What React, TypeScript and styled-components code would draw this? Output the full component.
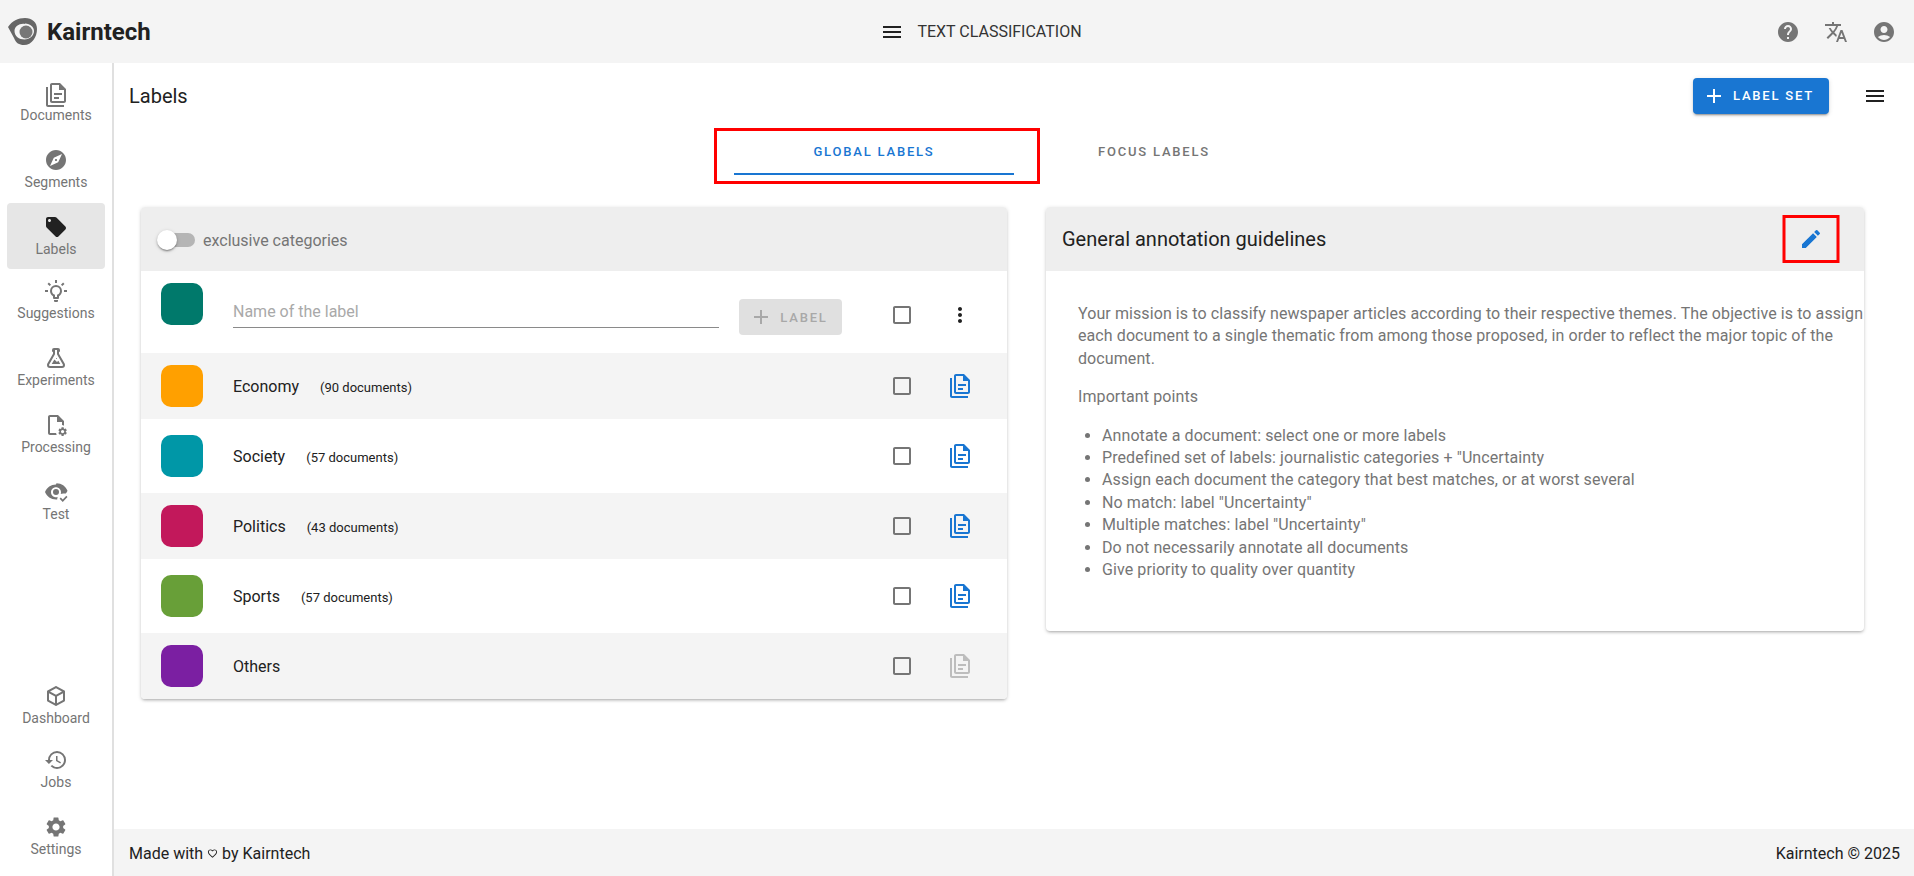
import React from "react";
import styled, { createGlobalStyle } from "styled-components";
import {
  MdAccountCircle,
  MdAdd,
  MdCheckBoxOutlineBlank,
  MdEdit,
  MdExplore,
  MdFavoriteBorder,
  MdHelp,
  MdHistory,
  MdLocalOffer,
  MdMenu,
  MdMoreVert,
  MdSettings,
  MdTranslate,
} from "react-icons/md";

const GlobalStyle = createGlobalStyle`
  html, body {
    margin: 0;
    height: 100%;
  }
  body {
    font-family: Roboto, "Liberation Sans", sans-serif;
    color: #212121;
    background: #fff;
    overflow: hidden;
  }
  * {
    box-sizing: border-box;
  }
`;

const Page = styled.div`
  height: 100vh;
  display: flex;
  flex-direction: column;
`;

const TopBar = styled.header`
  height: 63px;
  flex: none;
  display: grid;
  grid-template-columns: 1fr auto 1fr;
  align-items: center;
  background: #f4f4f4;
  padding: 0 18px 0 8px;
`;

const Brand = styled.div`
  display: flex;
  align-items: center;
  gap: 9px;
  font-size: 24px;
  font-weight: 700;
  color: #212121;
`;

const AppTitle = styled.div`
  display: flex;
  align-items: center;
  gap: 13px;
  font-size: 16px;
  color: #333;
  padding-left: 58px;

  svg {
    font-size: 24px;
    color: #212121;
  }
`;

const TopActions = styled.div`
  display: flex;
  justify-content: flex-end;
  align-items: center;
  gap: 24px;
  color: #757575;

  svg {
    font-size: 24px;
    display: block;
  }
`;

const Body = styled.div`
  flex: 1;
  min-height: 0;
  display: flex;
`;

const Sidebar = styled.nav`
  width: 114px;
  flex: none;
  display: flex;
  flex-direction: column;
  justify-content: space-between;
  border-right: 2px solid #e0e0e0;
  padding: 6px 7px 7px;
`;

const NavGroup = styled.div`
  display: flex;
  flex-direction: column;
  gap: 1px;
`;

const NavItem = styled.a<{ $active?: boolean; $tight?: boolean; $low?: boolean }>`
  height: 66px;
  display: flex;
  flex-direction: column;
  align-items: center;
  padding-top: 12px;
  margin-top: ${(p) => (p.$tight ? "-3px" : "0")};
  border-radius: 4px;
  background: ${(p) => (p.$active ? "#e6e6e6" : "transparent")};
  color: #757575;
  font-size: 14px;
  line-height: 16px;

  svg {
    width: 24px;
    height: 24px;
    display: block;
    margin-top: ${(p) => (p.$low ? "2px" : "0")};
    margin-bottom: ${(p) => (p.$low ? "0" : "2px")};
    color: ${(p) => (p.$active ? "#212121" : "#757575")};
  }
`;

const Main = styled.main`
  flex: 1;
  min-width: 0;
  display: flex;
  flex-direction: column;
`;

const Content = styled.div`
  flex: 1;
  min-height: 0;
  padding: 0 50px 0 27px;
`;

const TitleRow = styled.div`
  height: 65px;
  margin: 0 -23px 0 -12px;
  display: flex;
  align-items: center;
  justify-content: space-between;
`;

const PageTitle = styled.h1`
  margin: 0;
  font-size: 20px;
  font-weight: 400;
  color: #212121;
`;

const TitleActions = styled.div`
  display: flex;
  align-items: center;
  gap: 34px;

  > svg {
    font-size: 24px;
    color: #212121;
  }
`;

const PrimaryButton = styled.button`
  height: 36px;
  width: 136px;
  border: 0;
  border-radius: 4px;
  padding: 0 6px 0 0;
  display: flex;
  align-items: center;
  justify-content: center;
  gap: 7px;
  background: #1976d2;
  color: #fff;
  font: 500 13px Roboto, sans-serif;
  letter-spacing: 1.8px;
  box-shadow: 0 3px 1px -2px rgba(0, 0, 0, 0.2), 0 2px 2px rgba(0, 0, 0, 0.14),
    0 1px 5px rgba(0, 0, 0, 0.12);

  svg {
    font-size: 24px;
  }
`;

const TabBar = styled.div`
  display: flex;
  justify-content: center;
  padding-left: 23px;
`;

const Tab = styled.div<{ $active?: boolean }>`
  position: relative;
  width: 280px;
  height: 47px;
  display: flex;
  align-items: flex-start;
  justify-content: center;
  padding-top: 16px;
  font-size: 13px;
  font-weight: 500;
  line-height: 16px;
  letter-spacing: 1.8px;
  color: ${(p) => (p.$active ? "#1976d2" : "#757575")};
  border-bottom: 2px solid ${(p) => (p.$active ? "#1976d2" : "transparent")};
`;

const Callout = styled.span<{ $kind: "tab" | "icon" }>`
  position: absolute;
  border: 3px solid #f00;
  ${(p) =>
    p.$kind === "tab"
      ? "top: 0; left: -20px; width: 326px; height: 56px;"
      : "top: 50%; left: 50%; width: 57px; height: 48px; transform: translate(-50%, -50%);"}
`;

const Cards = styled.div`
  margin-top: 32px;
  display: grid;
  grid-template-columns: 866px 818px;
  gap: 39px;
  align-items: start;
`;

const Card = styled.section`
  border-radius: 4px;
  overflow: hidden;
  background: #fff;
  box-shadow: 0 2px 3px -1px rgba(0, 0, 0, 0.25), 0 1px 4px rgba(0, 0, 0, 0.14);
`;

const CardHeader = styled.div`
  height: 64px;
  display: flex;
  align-items: center;
  background: #eeeeee;
`;

const SwitchWrap = styled.div`
  position: relative;
  width: 34px;
  height: 14px;
  margin: 2px 8px 0 20px;
  border-radius: 7px;
  background: #b5b5b5;
`;

const SwitchThumb = styled.span`
  position: absolute;
  left: -4px;
  top: -3px;
  width: 20px;
  height: 20px;
  border-radius: 50%;
  background: #fff;
  box-shadow: 0 2px 2px -1px rgba(0, 0, 0, 0.3), 0 1px 2px rgba(0, 0, 0, 0.18),
    0 1px 4px rgba(0, 0, 0, 0.14);
`;

const SwitchLabel = styled.span`
  margin-top: 2px;
  font-size: 16px;
  color: #757575;
`;

const LabelRow = styled.div<{ $shade?: boolean; $tall?: boolean; $form?: boolean }>`
  height: ${(p) => (p.$form ? "82px" : p.$tall ? "74px" : "66px")};
  display: flex;
  align-items: ${(p) => (p.$form ? "flex-start" : "center")};
  padding: ${(p) => (p.$form ? "12px" : "0")} 0 0 20px;
  background: ${(p) => (p.$shade ? "#f4f4f4" : "#fff")};
`;

const Swatch = styled.div<{ $color: string }>`
  width: 42px;
  height: 42px;
  flex: none;
  margin-right: 30px;
  border-radius: 10px;
  background: ${(p) => p.$color};
`;

const LabelName = styled.div`
  flex: 1;
  display: flex;
  align-items: baseline;
  gap: 21px;
  font-size: 16px;
  color: #212121;
`;

const DocCount = styled.span`
  font-size: 13px;
`;

const NameField = styled.div`
  width: 486px;
  height: 33px;
  margin-top: 12px;
  padding-top: 7px;
  border-bottom: 1px solid #8a8a8a;
  font-size: 16px;
  line-height: 20px;
  color: #a9a9a9;
`;

const AddButton = styled.button`
  width: 103px;
  height: 36px;
  margin: 16px 0 0 20px;
  border: 0;
  border-radius: 4px;
  padding: 0 4px 0 0;
  display: flex;
  align-items: center;
  justify-content: center;
  gap: 7px;
  background: #e0e0e0;
  color: #a8a8a8;
  font: 500 13px Roboto, sans-serif;
  letter-spacing: 1.8px;

  svg {
    font-size: 24px;
  }
`;

const RowActions = styled.div<{ $form?: boolean }>`
  width: 136px;
  margin-left: ${(p) => (p.$form ? "auto" : "0")};
  margin-top: ${(p) => (p.$form ? "20px" : "0")};
  flex: none;
  display: grid;
  grid-template-columns: 24px 24px;
  justify-content: end;
  column-gap: 34px;
  padding-right: 35px;
  align-items: center;
  color: #757575;

  svg {
    font-size: 24px;
    display: block;
  }
`;

const DocIcon = styled.svg<{ $off?: boolean }>`
  width: 24px;
  height: 24px;
  display: block;
  color: ${(p) => (p.$off ? "#bdbdbd" : "#1976d2")};
`;

const GuideTitle = styled.h2`
  flex: 1;
  margin: 0;
  padding-left: 16px;
  font-size: 20px;
  font-weight: 400;
  color: #212121;
`;

const EditSlot = styled.div`
  position: relative;
  width: 24px;
  height: 24px;
  margin-right: 41px;
  color: #1976d2;

  svg {
    font-size: 24px;
    display: block;
  }
`;

const GuideBody = styled.div`
  padding: 32px 0 50px 32px;
  font-size: 16px;
  line-height: 22.4px;
  letter-spacing: 0.09px;
  color: #757575;

  p {
    margin: 0 0 16px;
  }
`;

const GuideList = styled.ul`
  margin: 0;
  padding-left: 24px;
`;

const Footer = styled.footer`
  height: 47px;
  flex: none;
  display: flex;
  align-items: center;
  justify-content: space-between;
  padding: 2px 14px 0 15px;
  background: #f4f4f4;
  font-size: 16px;
  color: #212121;
`;

const Made = styled.span`
  display: inline-flex;
  align-items: center;
  gap: 4px;

  svg {
    font-size: 11px;
  }
`;

const Icon = ({ d }: { d: string }) => (
  <svg viewBox="0 0 24 24" fill="currentColor">
    <path d={d} />
  </svg>
);

const docsPath =
  "M16 0H8C6.9 0 6 .9 6 2V18C6 19.1 6.9 20 8 20H20C21.1 20 22 19.1 22 18V6L16 0M20 18H8V2H15V7H20V18M4 4V22H20V24H4C2.9 24 2 23.1 2 22V4H4M10 10V12H18V10H10M10 14V16H15V14H10Z";
const bulbPath =
  "M20,11H23V13H20V11M1,11H4V13H1V11M13,1V4H11V1H13M4.92,3.5L7.05,5.64L5.63,7.05L3.5,4.93L4.92,3.5M16.95,5.63L19.07,3.5L20.5,4.93L18.36,7.05L16.95,5.63M12,6A6,6 0 0,1 18,12C18,14.22 16.79,16.16 15,17.2V19A1,1 0 0,1 14,20H10A1,1 0 0,1 9,19V17.2C7.21,16.16 6,14.22 6,12A6,6 0 0,1 12,6M14,21V22A1,1 0 0,1 13,23H11A1,1 0 0,1 10,22V21H14M11,18H13V15.87C14.73,15.43 16,13.86 16,12A4,4 0 0,0 12,8A4,4 0 0,0 8,12C8,13.86 9.27,15.43 11,15.87V18Z";
const flaskPath =
  "M5,19A1,1 0 0,0 6,20H18A1,1 0 0,0 19,19C19,18.79 18.93,18.59 18.82,18.43L13,8.35V4H11V8.35L5.18,18.43C5.07,18.59 5,18.79 5,19M6,22A3,3 0 0,1 3,19C3,18.4 3.18,17.84 3.5,17.37L9,7.81V6A1,1 0 0,1 8,5V4A2,2 0 0,1 10,2H14A2,2 0 0,1 16,4V5A1,1 0 0,1 15,6V7.81L20.5,17.37C20.82,17.84 21,18.4 21,19A3,3 0 0,1 18,22H6M13,16L14.34,14.66L16.27,18H7.73L10.39,13.39L13,16M12.5,12A0.5,0.5 0 0,1 13,12.5A0.5,0.5 0 0,1 12.5,13A0.5,0.5 0 0,1 12,12.5A0.5,0.5 0 0,1 12.5,12Z";
const cubePath =
  "M21,16.5C21,16.88 20.79,17.21 20.47,17.38L12.57,21.82C12.41,21.94 12.21,22 12,22C11.79,22 11.59,21.94 11.43,21.82L3.53,17.38C3.21,17.21 3,16.88 3,16.5V7.5C3,7.12 3.21,6.79 3.53,6.62L11.43,2.18C11.59,2.06 11.79,2 12,2C12.21,2 12.41,2.06 12.57,2.18L20.47,6.62C20.79,6.79 21,7.12 21,7.5V16.5M12,4.15L6.04,7.5L12,10.85L17.96,7.5L12,4.15M5,15.91L11,19.29V12.58L5,9.21V15.91M19,15.91V9.21L13,12.58V19.29L19,15.91Z";

const FileCogIcon = () => (
  <svg viewBox="0 0 24 24" fill="currentColor">
    <path d="M6 2C4.9 2 4 2.9 4 4V20C4 21.1 4.9 22 6 22H12.7C12.4 21.4 12.2 20.7 12.1 20H6V4H13V9H18V12.1C18.7 12.2 19.4 12.4 20 12.7V8L14 2H6Z" />
    <path
      transform="translate(13.2 13.2) scale(0.45)"
      d="M19.14 12.94c.04-.3.06-.61.06-.94 0-.32-.02-.64-.07-.94l2.03-1.58c.18-.14.23-.41.12-.61l-1.92-3.32c-.12-.22-.37-.29-.59-.22l-2.39.96c-.5-.38-1.03-.7-1.62-.94l-.36-2.54c-.04-.24-.24-.41-.48-.41h-3.84c-.24 0-.43.17-.47.41l-.36 2.54c-.59.24-1.13.57-1.62.94l-2.39-.96c-.22-.08-.47 0-.59.22L2.74 8.87c-.12.21-.08.47.12.61l2.03 1.58c-.05.3-.09.63-.09.94s.02.64.07.94l-2.03 1.58c-.18.14-.23.41-.12.61l1.92 3.32c.12.22.37.29.59.22l2.39-.96c.5.38 1.03.7 1.62.94l.36 2.54c.05.24.24.41.48.41h3.84c.24 0 .44-.17.47-.41l.36-2.54c.59-.24 1.13-.56 1.62-.94l2.39.96c.22.08.47 0 .59-.22l1.92-3.32c.12-.22.07-.47-.12-.61l-2.01-1.58zM12 15.6c-1.98 0-3.6-1.62-3.6-3.6s1.62-3.6 3.6-3.6 3.6 1.62 3.6 3.6-1.62 3.6-3.6 3.6z"
    />
  </svg>
);

const EyeCheckIcon = () => (
  <svg viewBox="0 0 24 24" fill="currentColor">
    <path
      fillRule="evenodd"
      d="M12 4.5C7 4.5 2.7 7.6 1 12c1.7 4.4 6 7.5 11 7.5.4 0 .8 0 1.2-.1 0-.8.2-1.6.5-2.4-.5.1-1.1.2-1.7.2-2.8 0-5-2.2-5-5s2.2-5 5-5 5 2.2 5 5c0 .6-.1 1.2-.3 1.7.8-.3 1.7-.5 2.6-.5h2.5c.7-.8 1.3-1.7 1.7-2.7-1.7-4.4-6-7.5-11-7.5Z"
    />
    <circle cx="12" cy="12" r="3" />
    <path d="M23.5 17L18.75 22L15.6 18.8L16.8 17.6L18.75 19.5L22.3 15.8L23.5 17Z" />
  </svg>
);

const Logo = () => (
  <svg width="30" height="28" viewBox="0 0 30 28">
    <path
      fill="#666"
      fillRule="evenodd"
      d="M0 9C4 3 10 0 17 0c7 0 12 4 12 11 0 8-5 16-13 16-5 0-8-2-10-7L0 9Zm17-3C12 5 6.500 8 6.500 13c0 5 4.500 8.500 10 8.500 5 0 9.500-4 9.500-8.500 0-4-3.500-7-9-7.500Z"
    />
    <circle cx="18" cy="14" r="6.500" fill="#777" />
  </svg>
);

const DocsGlyph = ({ off }: { off?: boolean }) => (
  <DocIcon $off={off} viewBox="0 0 24 24" fill="currentColor">
    <path d={docsPath} />
  </DocIcon>
);

const labels = [
  { name: "Economy", count: "(90 documents)", color: "#ffa000", shade: true },
  { name: "Society", count: "(57 documents)", color: "#0097a7", tall: true },
  { name: "Politics", count: "(43 documents)", color: "#c2185b", shade: true },
  { name: "Sports", count: "(57 documents)", color: "#689f38", tall: true },
  { name: "Others", color: "#7b1fa2", shade: true, off: true },
];

const points = [
  "Annotate a document: select one or more labels",
  'Predefined set of labels: journalistic categories + "Uncertainty',
  "Assign each document the category that best matches, or at worst several",
  'No match: label "Uncertainty"',
  'Multiple matches: label "Uncertainty"',
  "Do not necessarily annotate all documents",
  "Give priority to quality over quantity",
];

export default function App() {
  return (
    <Page>
      <GlobalStyle />
      <TopBar>
        <Brand>
          <Logo />
          Kairntech
        </Brand>
        <AppTitle>
          <MdMenu />
          TEXT CLASSIFICATION
        </AppTitle>
        <TopActions>
          <MdHelp />
          <MdTranslate />
          <MdAccountCircle />
        </TopActions>
      </TopBar>
      <Body>
        <Sidebar>
          <NavGroup>
            <NavItem $low>
              <Icon d={docsPath} />
              Documents
            </NavItem>
            <NavItem>
              <MdExplore />
              Segments
            </NavItem>
            <NavItem $active>
              <MdLocalOffer />
              Labels
            </NavItem>
            <NavItem $tight>
              <Icon d={bulbPath} />
              Suggestions
            </NavItem>
            <NavItem>
              <Icon d={flaskPath} />
              Experiments
            </NavItem>
            <NavItem>
              <FileCogIcon />
              Processing
            </NavItem>
            <NavItem>
              <EyeCheckIcon />
              Test
            </NavItem>
          </NavGroup>
          <NavGroup>
            <NavItem>
              <Icon d={cubePath} />
              Dashboard
            </NavItem>
            <NavItem $tight>
              <MdHistory />
              Jobs
            </NavItem>
            <NavItem>
              <MdSettings />
              Settings
            </NavItem>
          </NavGroup>
        </Sidebar>
        <Main>
          <Content>
            <TitleRow>
              <PageTitle>Labels</PageTitle>
              <TitleActions>
                <PrimaryButton>
                  <MdAdd />
                  LABEL SET
                </PrimaryButton>
                <MdMenu />
              </TitleActions>
            </TitleRow>
            <TabBar>
              <Tab $active>
                GLOBAL LABELS
                <Callout $kind="tab" />
              </Tab>
              <Tab>FOCUS LABELS</Tab>
            </TabBar>
            <Cards>
              <Card>
                <CardHeader>
                  <SwitchWrap>
                    <SwitchThumb />
                  </SwitchWrap>
                  <SwitchLabel>exclusive categories</SwitchLabel>
                </CardHeader>
                <LabelRow $form>
                  <Swatch $color="#00796b" />
                  <NameField>Name of the label</NameField>
                  <AddButton>
                    <MdAdd />
                    LABEL
                  </AddButton>
                  <RowActions $form>
                    <MdCheckBoxOutlineBlank />
                    <MdMoreVert color="#212121" />
                  </RowActions>
                </LabelRow>
                {labels.map((l) => (
                  <LabelRow key={l.name} $shade={l.shade} $tall={l.tall}>
                    <Swatch $color={l.color} />
                    <LabelName>
                      {l.name}
                      {l.count && <DocCount>{l.count}</DocCount>}
                    </LabelName>
                    <RowActions>
                      <MdCheckBoxOutlineBlank />
                      <DocsGlyph off={l.off} />
                    </RowActions>
                  </LabelRow>
                ))}
              </Card>
              <Card>
                <CardHeader>
                  <GuideTitle>General annotation guidelines</GuideTitle>
                  <EditSlot>
                    <MdEdit />
                    <Callout $kind="icon" />
                  </EditSlot>
                </CardHeader>
                <GuideBody>
                  <p>
                    Your mission is to classify newspaper articles according to their respective themes. The objective
                    is to assign each document to a single thematic from among those proposed, in order to reflect the
                    major topic of the document.
                  </p>
                  <p>Important points</p>
                  <GuideList>
                    {points.map((t) => (
                      <li key={t}>{t}</li>
                    ))}
                  </GuideList>
                </GuideBody>
              </Card>
            </Cards>
          </Content>
          <Footer>
            <Made>
              Made with <MdFavoriteBorder /> by Kairntech
            </Made>
            <span>Kairntech © 2025</span>
          </Footer>
        </Main>
      </Body>
    </Page>
  );
}
